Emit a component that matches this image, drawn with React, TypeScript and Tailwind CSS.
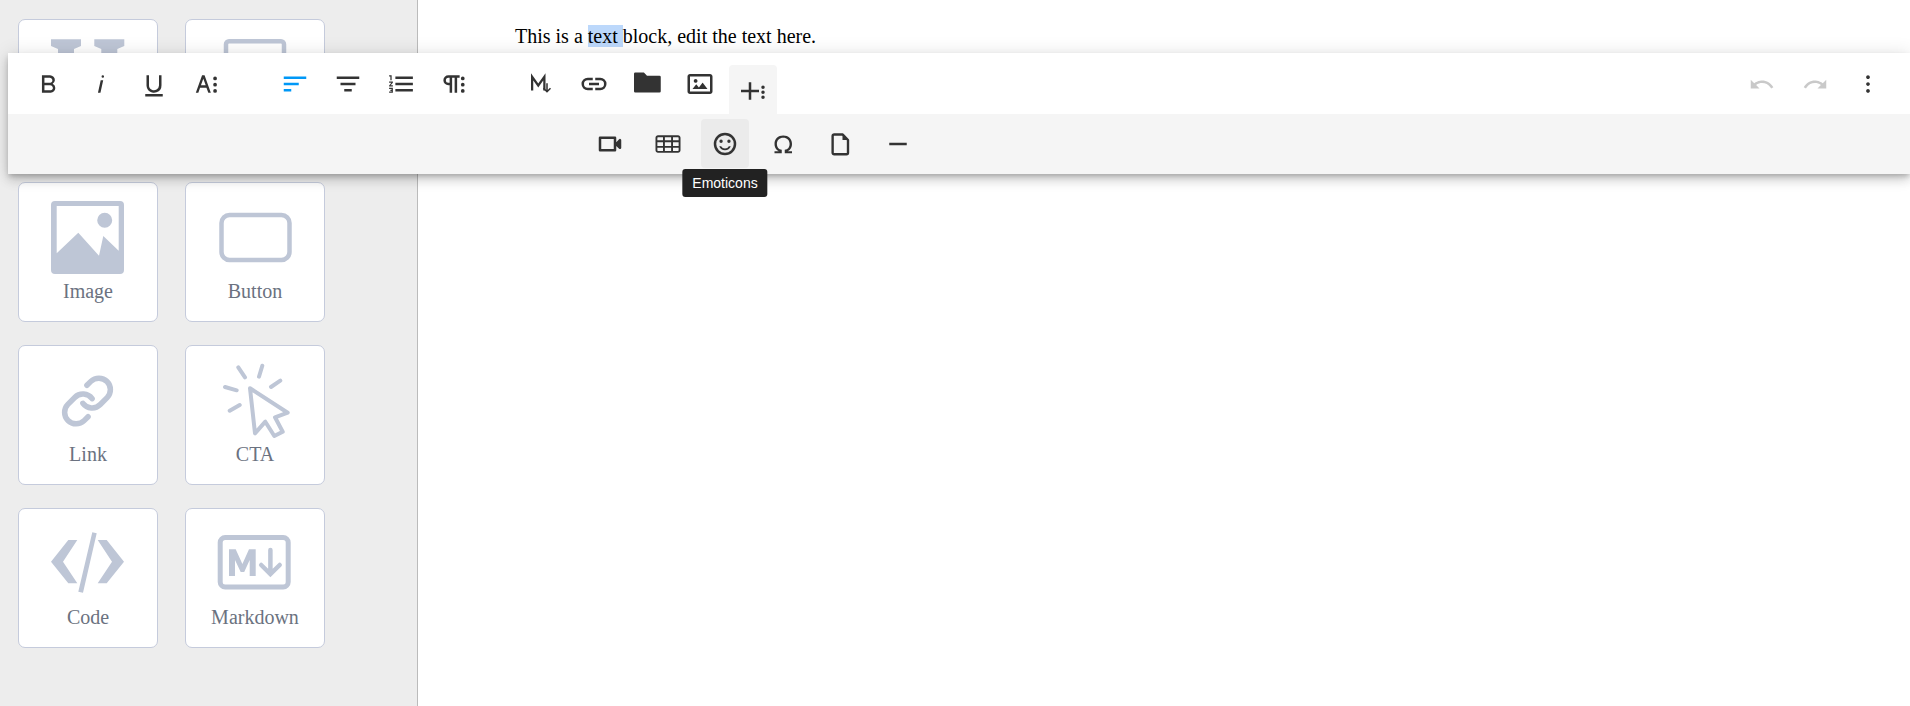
import React from "react";

const toolbarIcons: Record<string, React.ReactNode> = {
  bold: <path d="M15.25,11.8h0A3.68,3.68,0,0,0,17,9a3.93,3.93,0,0,0-3.86-4H6.65V19h7a3.74,3.74,0,0,0,3.7-3.78V15.1A3.64,3.64,0,0,0,15.25,11.8ZM8.65,7h4.2a2.09,2.09,0,0,1,2,1.3,2.09,2.09,0,0,1-1.37,2.61,2.23,2.23,0,0,1-.63.09H8.65Zm4.6,10H8.65V13h4.6a2.09,2.09,0,0,1,2,1.3,2.09,2.09,0,0,1-1.37,2.61A2.23,2.23,0,0,1,13.25,17Z" transform="translate(0.5 0)" />,
  italic: <path d="M11.76,9h2l-2.2,10h-2Zm1.68-4a1,1,0,1,0,1,1,1,1,0,0,0-1-1Z" />,
  underline: <path d="M19,20v2H5V20Zm-3-6.785a4,4,0,0,1-5.74,3.4A3.75,3.75,0,0,1,8,13.085V5.005H6v8.21a6,6,0,0,0,8,5.44,5.851,5.851,0,0,0,4-5.65v-8H16Z" />,
  textMore: <path d="M13.55,19h2l-5-14h-2l-5,14h2l1.4-4h5.1Zm-5.9-6,1.9-5.2,1.9,5.2Zm12.8,4.5a1.5,1.5,0,1,1-1.5-1.5A1.5,1.5,0,0,1,20.45,17.5Zm0-5a1.5,1.5,0,1,1-1.5-1.5A1.5,1.5,0,0,1,20.45,12.5Zm0-5A1.5,1.5,0,1,1,18.95,6,1.5,1.5,0,0,1,20.45,7.5Z" transform="translate(-0.5 0)" />,
  alignLeft: <path d="M3,18h6v-2H3V18z M3,11v2h12v-2H3z M3,6v2h18V6H3z" />,
  alignCenter: <path d="M9,18h6v-2H9V18z M6,11v2h12v-2H6z M3,6v2h18V6H3z" />,
  orderedList: <path d="M2.5,16h2v.5h-1v1h1v.5h-2v1h3V15h-3Zm1-7h1V5h-2V6h1Zm-1,2H4.3L2.5,13.1V14h3V13H3.7l1.8-2.1V10h-3Zm5-5V8h14V6Zm0,12h14V16H7.5Zm0-5h14V11H7.5Z" />,
  paragraphMore: <path d="M13.5,5h-6a4,4,0,0,0,0,8h1v6h2V7h2V19h2V7h2V5Zm-5,6h-1a2,2,0,0,1,0-4h1Zm12,6.5a1.5,1.5,0,1,1-1.5-1.5A1.5,1.5,0,0,1,20.5,17.5Zm0-5A1.5,1.5,0,1,1,19,11,1.5,1.5,0,0,1,20.5,12.5Zm0-5A1.5,1.5,0,1,1,19,6,1.5,1.5,0,0,1,20.5,7.5Z" />,
  markdown: (
    <g fill="none" stroke="currentColor" strokeLinejoin="miter">
      <path strokeWidth="1.8" d="M4.9,17.2V6.2L9.8,13.2L14.7,6.2V17.2" />
      <path strokeWidth="1.2" d="M16.8,11.4V18M14,15.4L16.8,18.2L19.6,15.4" />
    </g>
  ),
  link: <path d="M11,17H7A5,5,0,0,1,7,7h4V9H7a3,3,0,0,0,0,6h4ZM17,7H13V9h4a3,3,0,0,1,0,6H13v2h4A5,5,0,0,0,17,7Zm-1,4H8v2h8Z" />,
  folder: <path d="M2.6,2.8H9.5L12,5.4H22a1,1,0,0,1,1,1V17.8a1,1,0,0,1-1,1H2.6a1,1,0,0,1-1-1V3.8A1,1,0,0,1,2.6,2.8Z" />,
  image: <path d="M14.2,11l3.8,5H6l3-3.9l2.1,2.7L14,11H14.2z M8.5,11c0.8,0,1.5-0.7,1.5-1.5S9.3,8,8.5,8S7,8.7,7,9.5C7,10.3,7.7,11,8.5,11z M22,6v12c0,1.1-0.9,2-2,2H4c-1.1,0-2-0.9-2-2V6c0-1.1,0.9-2,2-2h16C21.1,4,22,4.9,22,6z M20,8.8V6H4v12h16V8.8z" />,
  plusMore: <path d="M8.6,11.8H2.4v2H8.6v6h2v-6h6.2v-2H10.6v-6h-2ZM21.4,17.8a1.4,1.4,0,1,1-1.4-1.4A1.4,1.4,0,0,1,21.4,17.8Zm0-4.1A1.4,1.4,0,1,1,20,12.3,1.4,1.4,0,0,1,21.4,13.7Zm0-4A1.4,1.4,0,1,1,20,8.3,1.4,1.4,0,0,1,21.4,9.7Z" />,
  video: <path d="M15,8v8H5V8H15m2,2.5V7a1,1,0,0,0-1-1H4A1,1,0,0,0,3,7V17a1,1,0,0,0,1,1H16a1,1,0,0,0,1-1V13.5l2.29,2.29A1,1,0,0,0,21,15.08V8.91a1,1,0,0,0-1.71-.71Z" />,
  table: <path d="M20,5H4C2.9,5,2,5.9,2,7v2v1.5v3V15v2c0,1.1,0.9,2,2,2h16c1.1,0,2-0.9,2-2v-2v-1.5v-3V9V7C22,5.9,21.1,5,20,5z M9.5,13.5v-3 h5v3H9.5z M14.5,15v2.5h-5V15H14.5z M9.5,9V6.5h5V9H9.5z M3.5,7c0-0.3,0.2-0.5,0.5-0.5h4V9H3.5V7z M3.5,10.5H8v3H3.5V10.5z M3.5,17 v-2H8v2.5H4C3.7,17.5,3.5,17.3,3.5,17z M20.5,17c0,0.3-0.2,0.5-0.5,0.5h-4V15h4.5V17z M20.5,13.5H16v-3h4.5V13.5z M16,9V6.5h4 c0.3,0,0.5,0.2,0.5,0.5v2H16z" />,
  smile: <path d="M11.991,3A9,9,0,1,0,21,12,8.99557,8.99557,0,0,0,11.991,3ZM12,19a7,7,0,1,1,7-7A6.99808,6.99808,0,0,1,12,19Zm3.105-5.2h1.503a4.94542,4.94542,0,0,1-9.216,0h1.503a3.57808,3.57808,0,0,0,6.21,0ZM7.5,9.75A1.35,1.35,0,1,1,8.85,11.1,1.35,1.35,0,0,1,7.5,9.75Zm6.3,0a1.35,1.35,0,1,1,1.35,1.35A1.35,1.35,0,0,1,13.8,9.75Z" />,
  omega: <path d="M5.2,19.4V17.8H8.6A6.6,6.6,0,0,1,5.2,11.9C5.2,8,8.1,5.2,12.2,5.2s7,2.8,7,6.7a6.6,6.6,0,0,1-3.4,5.9h3.4v1.6H13.4V16.6a4.8,4.8,0,0,0,3.9-4.7c0-3-2.1-5-5.1-5s-5.1,2-5.1,5a4.8,4.8,0,0,0,3.9,4.7v2.8Z" />,
  file: (
    <g>
      <path
        fill="none"
        stroke="currentColor"
        strokeWidth="1.9"
        strokeLinejoin="round"
        d="M7.3,4.4H14.2L18.4,8.8V19a1.2,1.2,0,0,1-1.2,1.2H7.3A1.2,1.2,0,0,1,6.1,19V5.6A1.2,1.2,0,0,1,7.3,4.4Z"
      />
      <path d="M14,4.4L18.4,8.8H14Z" />
    </g>
  ),
  hr: <path d="M5,11h14v2H5z" />,
  undo: <path d="M10.4,9.4c-1.7,0.3-3.2,0.9-4.6,2L3,8.5v7h7l-2.7-2.7c3.7-2.6,8.8-1.8,11.5,1.9c0.2,0.3,0.4,0.5,0.5,0.8l1.8-0.9 C18.9,10.8,14.7,8.7,10.4,9.4z" />,
  redo: <path d="M13.6,9.4c1.7,0.3,3.2,0.9,4.6,2L21,8.5v7h-7l2.7-2.7C13,10.1,7.9,11,5.3,14.7c-0.2,0.3-0.4,0.5-0.5,0.8L3,14.6 C5.1,10.8,9.3,8.7,13.6,9.4z" />,
  more: <path d="M13.5,17.5c0,0.8-0.7,1.5-1.5,1.5s-1.5-0.7-1.5-1.5s0.7-1.5,1.5-1.5S13.5,16.7,13.5,17.5z M13.5,12c0,0.8-0.7,1.5-1.5,1.5s-1.5-0.7-1.5-1.5s0.7-1.5,1.5-1.5S13.5,11.2,13.5,12z M13.5,6.5c0,0.8-0.7,1.5-1.5,1.5s-1.5-0.7-1.5-1.5S11.2,5,12,5S13.5,5.7,13.5,6.5z" />,
};

const ToolButton: React.FC<{ icon: string; className?: string; children?: React.ReactNode }> = ({
  icon,
  className = "text-[#333333]",
  children,
}) => (
  <div className={`relative flex h-[49px] w-12 items-center justify-center rounded ${className}`}>
    <svg viewBox="0 0 24 24" className="h-[30px] w-[30px]" fill="currentColor">
      {toolbarIcons[icon]}
    </svg>
    {children}
  </div>
);

const ToolGroup: React.FC<{ icons: string[] }> = ({ icons }) => (
  <div className="flex gap-[5px]">
    {icons.map((icon) => (
      <ToolButton key={icon} icon={icon} className={icon === "alignLeft" ? "text-[#0098f7]" : "text-[#333333]"} />
    ))}
  </div>
);

const Toolbar: React.FC = () => (
  <div className="absolute left-2 right-0 top-[53px] bg-white shadow-[0_3px_5px_-1px_rgba(0,0,0,0.2),0_6px_10px_0_rgba(0,0,0,0.14),0_1px_18px_0_rgba(0,0,0,0.12)]">
    <div className="flex h-[61px] items-start justify-between pl-4 pr-[18px] pt-[6px]">
      <div className="flex gap-10">
        <ToolGroup icons={["bold", "italic", "underline", "textMore"]} />
        <ToolGroup icons={["alignLeft", "alignCenter", "orderedList", "paragraphMore"]} />
        <div className="-ml-px flex gap-[5px]">
          <ToolGroup icons={["markdown", "link", "folder", "image"]} />
          <div className="mt-[6px] rounded-t bg-[#f5f5f5]">
            <ToolButton icon="plusMore" />
          </div>
        </div>
      </div>
      <div className="flex gap-[5px]">
        <ToolButton icon="undo" className="text-[#c9c9c9]" />
        <ToolButton icon="redo" className="text-[#c9c9c9]" />
        <ToolButton icon="more" />
      </div>
    </div>
    <div className="flex h-[60px] gap-[9.5px] bg-[#f5f5f5] pl-[578px] pt-[5px]">
      <ToolButton icon="video" />
      <ToolButton icon="table" />
      <ToolButton icon="smile" className="bg-[#ebebeb] text-[#333333]">
        <div className="absolute left-1/2 top-[calc(100%+1px)] -translate-x-1/2 whitespace-nowrap rounded-[3px] bg-[#222222] px-[10px] py-[5px] font-['Liberation_Sans',sans-serif] text-[14px] leading-[18px] text-white">
          Emoticons
        </div>
      </ToolButton>
      <ToolButton icon="omega" />
      <ToolButton icon="file" />
      <ToolButton icon="hr" />
    </div>
  </div>
);

const blocks: { label: string; icon: React.ReactNode }[] = [
  {
    label: "Text",
    icon: (
      <path d="M0,1.3H30V8L23,11V60H7V11L0,8ZM43.3,1.3H73.3V8L66.3,11V60H50.3V11L43.3,8Z" fill="currentColor" />
    ),
  },
  {
    label: "Block",
    icon: <rect x="8" y="3.2" width="58" height="45" rx="3" fill="none" stroke="currentColor" strokeWidth="4.5" />,
  },
  {
    label: "Image",
    icon: (
      <path
        fillRule="evenodd"
        fill="currentColor"
        d="M4,0H69a4,4,0,0,1,4,4V69a4,4,0,0,1-4,4H4a4,4,0,0,1-4-4V4A4,4,0,0,1,4,0ZM5.7,5V52.3L27.3,31.7,48,54.7,52.3,35,67.7,49.7V5ZM53.7,11.8a7.5,7.5,0,1,1-7.5,7.5A7.5,7.5,0,0,1,53.7,11.8Z"
      />
    ),
  },
  {
    label: "Button",
    icon: <rect x="3.5" y="14" width="68" height="45" rx="8" fill="none" stroke="currentColor" strokeWidth="4.5" />,
  },
  {
    label: "Link",
    icon: (
      <g transform="translate(8.9 9.4) scale(2.3)" fill="none" stroke="currentColor" strokeWidth="2.4" strokeLinecap="round" strokeLinejoin="round">
        <path d="M10 13a5 5 0 0 0 7.54.54l3-3a5 5 0 0 0-7.07-7.07l-1.72 1.71" />
        <path d="M14 11a5 5 0 0 0-7.54-.54l-3 3a5 5 0 0 0 7.07 7.07l1.71-1.71" />
      </g>
    ),
  },
  {
    label: "CTA",
    icon: (
      <g transform="translate(2 0)" fill="none" stroke="currentColor" strokeWidth="4" strokeLinecap="round" strokeLinejoin="round">
        <path d="M18.3,3.3L25,13.3M42.3,1.7L39,12.7M60.3,16.7L51,23M5,23L16.7,26.3M9.7,46.7L19.7,41" />
        <path d="M30,24.3L67.7,48.7L55,53.3L62.7,67.7L54.3,72L45.3,57.7L35,69.3Z" />
      </g>
    ),
  },
  {
    label: "Code",
    icon: (
      <path
        fill="currentColor"
        d="M26.3,13H17.3L0,34.7,17.3,56.3h9L12,34.7ZM46.7,13h9L73,34.7,55.7,56.3h-9L61,34.7ZM41.3,5.3l4.4,1L32,65.7l-4.7-1Z"
      />
    ),
  },
  {
    label: "Markdown",
    icon: (
      <g transform="translate(0.7 0)">
        <rect x="1.5" y="10.5" width="68" height="49.5" rx="5" fill="none" stroke="currentColor" strokeWidth="5" />
        <path fill="currentColor" d="M10.3,49V22.3H17L23.7,37L30.3,22.3H37V49H31V33L25.5,45H22L16.3,33V49Z" />
        <path fill="none" stroke="currentColor" strokeWidth="4.5" strokeLinecap="round" d="M51.7,23V46M42.5,38L51.7,47L61,38" />
      </g>
    ),
  },
];

export default function App() {
  return (
    <div className="relative flex h-screen overflow-hidden bg-white font-['Liberation_Serif',serif]">
      <aside className="w-[418px] shrink-0 border-r border-[#bbbbbb] bg-[#ededed] pl-[18px] pt-[19px]">
        <div className="grid grid-cols-[140px_140px] gap-x-[27px] gap-y-[23px]">
          {blocks.map((block) => (
            <div
              key={block.label}
              className="flex h-[140px] flex-col items-center rounded-[7px] border border-[#c5cbdc] bg-white pt-[18px] text-[#bec6d6]"
            >
              <svg viewBox="0 0 73 73" className="-ml-px h-[73px] w-[73px] overflow-visible">
                {block.icon}
              </svg>
              <span className="mt-[6px] text-[20px] leading-[23px] text-[#6b7280]">{block.label}</span>
            </div>
          ))}
        </div>
      </aside>
      <main className="flex-1 pl-[97px] pt-[25px] text-[20px] leading-[23px] text-black">
        This is a <span className="bg-[#bcd8fb]">text </span>block, edit the text here.
      </main>
      <Toolbar />
    </div>
  );
}
